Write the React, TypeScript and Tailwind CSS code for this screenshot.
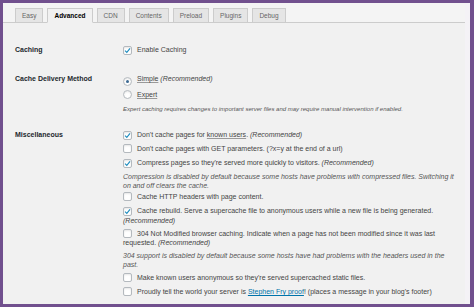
const tabs = ["Easy", "Advanced", "CDN", "Contents", "Preload", "Plugins", "Debug"];

const Check = ({ on }: { on?: boolean }) => (
  <span className="mr-[5px] inline-flex h-[9px] w-[9px] items-center justify-center rounded-[2px] border border-[#b4b9be] bg-white align-[-2px] shadow-[inset_0_1px_2px_rgba(0,0,0,0.1)]">
    {on && (
      <svg viewBox="0 0 10 10" className="h-[7px] w-[7px]">
        <path d="M1.5 5.2 L4 7.6 L8.6 2" fill="none" stroke="#1e8cbe" strokeWidth="1.6" />
      </svg>
    )}
  </span>
);

const Radio = ({ on }: { on?: boolean }) => (
  <span className="mr-[5px] inline-flex h-[9px] w-[9px] items-center justify-center rounded-full border border-[#b4b9be] bg-white align-[-2px] shadow-[inset_0_1px_2px_rgba(0,0,0,0.1)]">
    {on && <span className="h-[3px] w-[3px] rounded-full bg-[#3d6a93]" />}
  </span>
);

const Rec = () => <i>(Recommended)</i>;

export default function App() {
  return (
    <div
      className="h-[307px] w-[474px] overflow-hidden bg-[#71508e] pb-[3px] pl-[3px] pr-[4px] pt-[3px] text-[7px] text-[#444]"
      style={{ fontFamily: '"Liberation Sans", Arial, sans-serif' }}
    >
      <div className="flex h-full flex-col overflow-hidden border-r-[5px] border-[#f4f2f6] bg-[#f1f1f1]">
        {/* tabs */}
        <div className="flex gap-[4px] border-b border-[#ccc] bg-[#f4f4f4] pl-[12px] pt-[5px]">
          {tabs.map((t) => (
            <div
              key={t}
              className={
                "-mb-px h-[15px] border border-[#ccc] px-[6px] text-[6.5px] leading-[13px] " +
                (t === "Advanced"
                  ? "border-b-[#f1f1f1] bg-[#f1f1f1] font-bold text-[#000]"
                  : "bg-[#e5e5e5] text-[#666]")
              }
            >
              {t}
            </div>
          ))}
        </div>

        <div className="flex flex-col pl-[12px] leading-[10px]">
          {/* Caching */}
          <div className="mt-[22px] flex">
            <div className="w-[108px] font-bold text-[#23282d]">Caching</div>
            <div className="whitespace-nowrap">
              <Check on />
              Enable Caching
            </div>
          </div>

          {/* Cache Delivery Method */}
          <div className="mt-[19px] flex">
            <div className="w-[108px] font-bold text-[#23282d]">Cache Delivery Method</div>
            <div className="flex flex-col gap-[4px] whitespace-nowrap">
              <div>
                <Radio on />
                <span className="underline decoration-[#999]">Simple</span> <Rec />
              </div>
              <div>
                <Radio />
                <span className="underline decoration-[#999]">Expert</span>
              </div>
              <div className="text-[6px] italic text-[#555]">
                Expert caching requires changes to important server files and may require manual intervention if enabled.
              </div>
            </div>
          </div>

          {/* Miscellaneous */}
          <div className="mt-[16px] flex">
            <div className="w-[108px] font-bold text-[#23282d]">Miscellaneous</div>
            <div className="flex flex-col gap-[4px] whitespace-nowrap">
              <div>
                <Check on />
                Don't cache pages for <span className="underline decoration-[#999]">known users</span>. <Rec />
              </div>
              <div>
                <Check />
                Don't cache pages with GET parameters. (?x=y at the end of a url)
              </div>
              <div>
                <Check on />
                Compress pages so they're served more quickly to visitors. <Rec />
              </div>
              <div className="leading-[9px] italic text-[#555]">
                Compression is disabled by default because some hosts have problems with compressed files. Switching it
                <br />
                on and off clears the cache.
              </div>
              <div className="-mt-[2px]">
                <Check />
                Cache HTTP headers with page content.
              </div>
              <div className="leading-[9px]">
                <Check on />
                Cache rebuild. Serve a supercache file to anonymous users while a new file is being generated.
                <br />
                <Rec />
              </div>
              <div className="leading-[9px]">
                <Check />
                304 Not Modified browser caching. Indicate when a page has not been modified since it was last
                <br />
                requested. <Rec />
              </div>
              <div className="leading-[9px] italic text-[#555]">
                304 support is disabled by default because some hosts have had problems with the headers used in the
                <br />
                past.
              </div>
              <div>
                <Check />
                Make known users anonymous so they're served supercached static files.
              </div>
              <div>
                <Check />
                Proudly tell the world your server is{" "}
                <span className="text-[#0073aa] underline">Stephen Fry proof</span>! (places a message in your blog's footer)
              </div>
            </div>
          </div>
        </div>
      </div>
    </div>
  );
}
